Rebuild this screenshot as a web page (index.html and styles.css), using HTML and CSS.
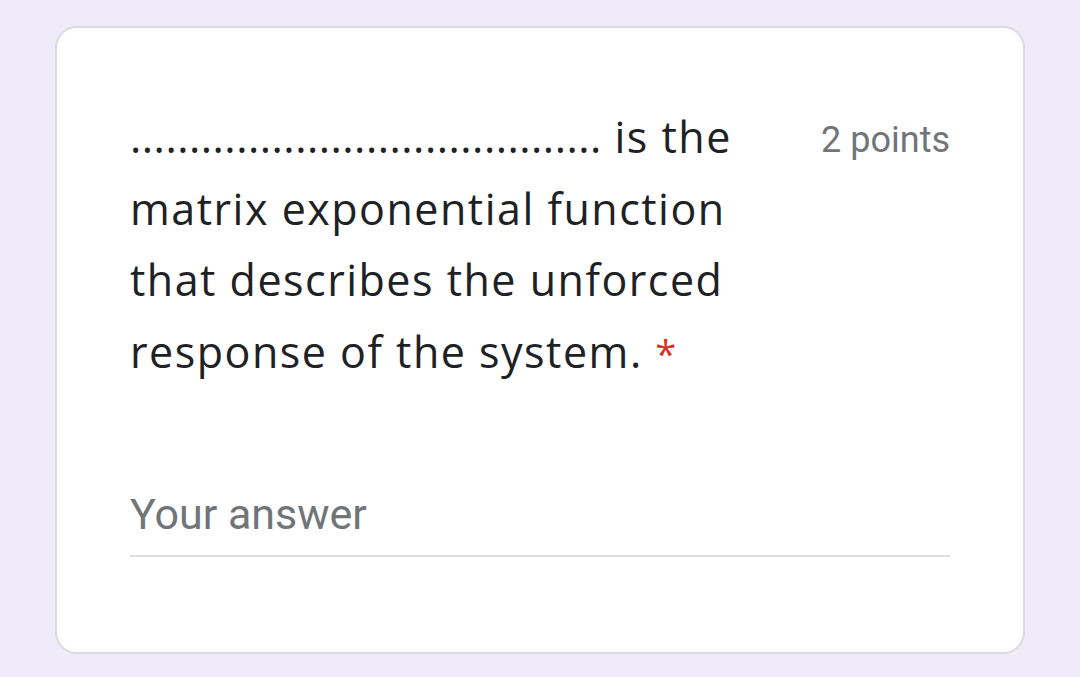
FILE: index.html
```html
<!DOCTYPE html>
<html lang="en">
<head>
  <meta charset="UTF-8">
  <title>Question</title>
  <link rel="stylesheet" href="styles.css">
</head>
<body>
  <div class="card">
    <div class="question-head">
      <div class="question-title"><span class="blank">........................................</span> is the matrix exponential function that describes the unforced response of the system. <span class="required">*</span></div>
      <div class="points">2 points</div>
    </div>
    <div class="answer">
      <input type="text" placeholder="Your answer">
    </div>
  </div>
</body>
</html>
```

FILE: styles.css
```css
body { margin: 0; background: #f0ebf8; }
.card {
  margin: 26px 0 0 55px;
  width: 970px;
  height: 628px;
  box-sizing: border-box;
  background: #fff;
  border: 2px solid #dadce0;
  border-radius: 22px;
  padding: 73px 73px 0 73px;
}
.question-head { display: flex; justify-content: space-between; align-items: flex-start; }
.question-title {
  width: 625px;
  font-family: "Open Sans", sans-serif;
  font-size: 43px;
  letter-spacing: 1.5px;
  line-height: 71.5px;
  color: #202124;
}
.blank { letter-spacing: 0.5px; }
.required { color: #d93025; font-size: 38px; }
.points {
  margin-top: 4px;
  font-family: Roboto, sans-serif;
  font-size: 36px;
  line-height: 71.5px;
  color: #70757a;
}
.answer { margin-top: 100px; }
.answer input {
  display: block;
  width: 100%;
  box-sizing: border-box;
  border: none;
  border-bottom: 2px solid #e0e0e0;
  outline: none;
  padding: 0 0 16px 0;
  font-family: Roboto, sans-serif;
  font-size: 43px;
  line-height: 50px;
  height: 68px;
  color: #202124;
}
.answer input::placeholder { color: #70757a; }
```
